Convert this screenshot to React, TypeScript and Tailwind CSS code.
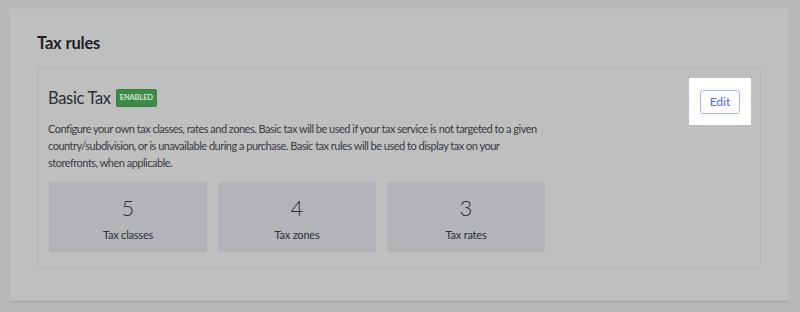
import React from "react";

const stats = [
  { n: "5", label: "Tax classes" },
  { n: "4", label: "Tax zones" },
  { n: "3", label: "Tax rates" },
];

export default function App() {
  return (
    <div
      className="w-[800px] h-[312px] bg-[#b8b9bb] pt-[9px] pl-[10px] pr-[11px]"
      style={{ fontFamily: "Lato, 'Noto Sans', sans-serif" }}
    >
      <div className="h-[292px] bg-[#bfbfbf] rounded-[2px] shadow-[0_1px_1px_rgba(0,0,0,0.12)] pl-[27px] pr-[28px] pt-[22px]">
        <h2 className="text-[16.5px] font-bold text-[#1f2127] leading-[24px] tracking-[-0.01em]">Tax rules</h2>
        <div className="mt-[12px] h-[201px] border border-[#b3b4b6] rounded-[3px] pl-[10px] pr-[9px] pt-[10px] flex">
          <div className="flex-1">
            <div className="flex items-center mt-[10px] h-[20px]">
              <span className="text-[16.5px] text-[#2b2d33] leading-[20px] tracking-[-0.02em]">Basic Tax</span>
              <span className="ml-[5px] bg-[#3e8a48] border border-[#3a7d43] text-[#d2e3d4] text-[7.5px] font-bold rounded-[2px] px-[3px] h-[18px] flex items-center tracking-[-0.02em]">
                ENABLED
              </span>
            </div>
            <p className="mt-[12px] text-[11px] leading-[17px] text-[#3a3c43] whitespace-nowrap tracking-[-0.5px]">
              Configure your own tax classes, rates and zones. Basic tax will be used if your tax service is not targeted to a given
              <br />
              country/subdivision, or is unavailable during a purchase. Basic tax rules will be used to display tax on your
              <br />
              storefronts, when applicable.
            </p>
            <div className="mt-[11px] flex gap-[11px] pl-[1px]">
              {stats.map((s) => (
                <div
                  key={s.label}
                  className="w-[158px] h-[70px] bg-[#b3b4b8] rounded-[2px] flex flex-col items-center pt-[13px]"
                >
                  <div className="text-[22px] font-light leading-[26px] text-[#2e3038]">{s.n}</div>
                  <div className="mt-[7px] text-[11px] leading-[14px] text-[#2e3038] tracking-[-0.2px]">{s.label}</div>
                </div>
              ))}
            </div>
          </div>
          <div className="w-[62px] h-[47px] bg-white flex items-center justify-center">
            <button className="w-[40px] h-[24px] border border-[#a9b8fb] rounded-[3px] text-[12px] font-medium text-[#5b6ef2] bg-white">
              Edit
            </button>
          </div>
        </div>
      </div>
    </div>
  );
}
